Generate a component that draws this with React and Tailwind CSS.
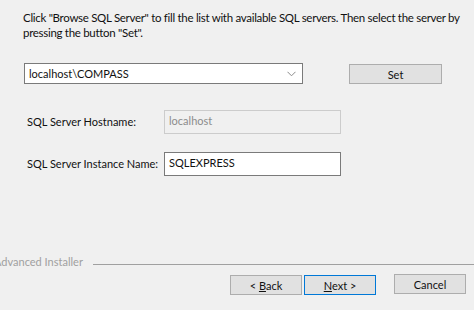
export default function App() {
  return (
    <div className="w-[474px] h-[310px] bg-[#f0f0f0] overflow-hidden text-[11px] text-[#111] font-['Lato',sans-serif]">
      {/* instructions */}
      <p className="pt-[10px] pl-[23px] w-[474px] pr-[8px] leading-[15px] text-[11.5px] tracking-[-0.3px]">
        Click "Browse SQL Server" to fill the list with available SQL servers. Then select the server by pressing the button "Set".
      </p>

      {/* server picker */}
      <div className="flex items-start mt-[23px] h-[21px]">
        <div className="ml-[24px] w-[279px] h-[21px] bg-white border border-[#7a7a7a] flex items-center pl-[4px] pr-[6px]">
          <span className="flex-1 leading-none">localhost\COMPASS</span>
          <svg width="9" height="6" viewBox="0 0 9 6" className="text-[#8a8a8a]">
            <path d="M0.5 0.8 L4.5 4.8 L8.5 0.8" fill="none" stroke="currentColor" strokeWidth="1" />
          </svg>
        </div>
        <button className="ml-[46px] mt-[1px] w-[93px] h-[20px] bg-[#e1e1e1] border border-[#adadad] leading-none">
          Set
        </button>
      </div>

      {/* hostname */}
      <div className="flex items-center mt-[26px] h-[24px]">
        <span className="ml-[27px] w-[137px] whitespace-nowrap">SQL Server Hostname:</span>
        <div className="w-[177px] h-[24px] border border-[#cccccc] pl-[4px] pt-[2px] text-[#8c8c8c]">
          localhost
        </div>
      </div>

      {/* instance name */}
      <div className="flex items-center mt-[18px] h-[24px]">
        <span className="ml-[27px] w-[137px] whitespace-nowrap">SQL Server Instance Name:</span>
        <div className="w-[177px] h-[24px] bg-white border border-[#7a7a7a] pl-[4px] pt-[2px]">
          SQLEXPRESS
        </div>
      </div>

      {/* footer divider */}
      <div className="flex items-center mt-[79px] h-[12px]">
        <span className="ml-[-6px] text-[#a0a0a0] leading-none">Advanced Installer</span>
        <div className="flex-1 ml-[10px] h-px bg-[#a0a0a0] mt-[6px]" />
      </div>

      {/* wizard buttons */}
      <div className="flex items-start mt-[7px]">
        <button className="ml-[230px] mt-[1px] w-[72px] h-[20px] bg-[#e1e1e1] border border-[#adadad] leading-none">
          &lt; <u>B</u>ack
        </button>
        <button className="ml-[2px] mt-[1px] w-[72px] h-[20px] bg-[#e1e1e1] border border-[#0078d7] leading-none">
          <u>N</u>ext &gt;
        </button>
        <button className="ml-[18px] w-[72px] h-[20px] bg-[#e1e1e1] border border-[#adadad] leading-none">
          Cancel
        </button>
      </div>
    </div>
  );
}
